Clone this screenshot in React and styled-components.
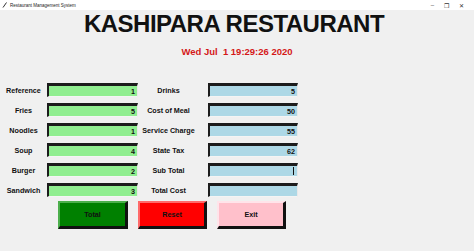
import React from "react";
import styled, { createGlobalStyle } from "styled-components";

const Global = createGlobalStyle`
  html, body { margin: 0; padding: 0; }
  body { width: 474px; height: 251px; overflow: hidden; background: #f0f0f0; font-family: "Liberation Sans", Arial, sans-serif; }
`;

const Window = styled.div`
  width: 474px;
  height: 251px;
  display: flex;
  flex-direction: column;
  background: #f0f0f0;
`;

const TitleBar = styled.div`
  height: 10px;
  background: #ffffff;
  display: flex;
  align-items: center;
  padding: 0 4px 0 2px;
  font-size: 4.5px;
  color: #222;
`;

const AppName = styled.span`
  margin-left: 3px;
  flex: 1;
`;

const Controls = styled.div`
  display: flex;
  gap: 10px;
  font-size: 6px;
  color: #333;
  padding-right: 6px;
`;

const Heading = styled.h1`
  margin: 2px 6px 0 0;
  text-align: center;
  font-size: 24px;
  line-height: 24px;
  letter-spacing: -0.5px;
  font-weight: 700;
  color: #111;
`;

const DateLine = styled.div`
  margin-top: 10px;
  text-align: center;
  font-size: 9.5px;
  line-height: 11px;
  font-weight: 700;
  color: #d41818;
  white-space: pre;
`;

const Form = styled.div`
  margin-top: 26px;
  display: grid;
  grid-template-columns: 47px 91px 70px 90px;
  grid-auto-rows: 14px;
  row-gap: 6px;
  align-items: center;
`;

const Label = styled.div`
  text-align: center;
  font-size: 7.2px;
  font-weight: 700;
  color: #111;
  padding-right: ${(p) => (p.$right ? "9px" : "0")};
`;

const Entry = styled.div`
  box-sizing: border-box;
  height: 14px;
  background: ${(p) => p.$bg};
  border-top: 3px solid #1c1c1c;
  border-left: 2px solid #1c1c1c;
  border-right: 1px solid #e8e8e8;
  border-bottom: 1px solid #f4f4f4;
  display: flex;
  align-items: center;
  justify-content: flex-end;
  padding-right: 2px;
  font-size: 7.2px;
  font-weight: 700;
  color: #111;
`;

const Caret = styled.span`
  width: 1px;
  height: 8px;
  background: #111;
  margin-right: 1px;
`;

const Buttons = styled.div`
  margin-top: 4px;
  padding-left: 58px;
  display: flex;
  gap: 10px;
`;

const Button = styled.button`
  box-sizing: border-box;
  width: ${(p) => p.$w || 69}px;
  height: 28px;
  background: ${(p) => p.$bg};
  border-top: 2px solid ${(p) => p.$hi};
  border-left: 2px solid ${(p) => p.$hi};
  border-right: 3px solid #111;
  border-bottom: 3px solid #111;
  font-family: "Liberation Sans", Arial, sans-serif;
  font-size: 7.2px;
  font-weight: 700;
  color: #111;
  padding: 0;
`;

const Feather = () => (
  <svg width="5" height="6" viewBox="0 0 5 6">
    <path d="M4.5 0.5 L1 5.5" stroke="#333" strokeWidth="1" />
  </svg>
);

const left = [
  ["Reference", "1"],
  ["Fries", "5"],
  ["Noodles", "1"],
  ["Soup", "4"],
  ["Burger", "2"],
  ["Sandwich", "3"],
];
const right = [
  ["Drinks", "5"],
  ["Cost of Meal", "50"],
  ["Service Charge", "55"],
  ["State Tax", "62"],
  ["Sub Total", "", true],
  ["Total Cost", ""],
];

export default function App() {
  return (
    <Window>
      <Global />
      <TitleBar>
        <Feather />
        <AppName>Restaurant Management System</AppName>
        <Controls>
          <span>–</span>
          <span>❐</span>
          <span>✕</span>
        </Controls>
      </TitleBar>
      <Heading>KASHIPARA RESTAURANT</Heading>
      <DateLine>{"Wed Jul  1 19:29:26 2020"}</DateLine>
      <Form>
        {left.map((l, i) => (
          <React.Fragment key={l[0]}>
            <Label>{l[0]}</Label>
            <Entry $bg="#90ee90">{l[1]}</Entry>
            <Label $right>{right[i][0]}</Label>
            <Entry $bg="#add8e6">
              {right[i][1]}
              {right[i][2] && <Caret />}
            </Entry>
          </React.Fragment>
        ))}
      </Form>
      <Buttons>
        <Button $bg="#008000" $hi="#4caf4c" $w={70}>Total</Button>
        <Button $bg="#ff0000" $hi="#ff6a6a">Reset</Button>
        <Button $bg="#ffc0cb" $hi="#ffe4ea">Exit</Button>
      </Buttons>
    </Window>
  );
}
